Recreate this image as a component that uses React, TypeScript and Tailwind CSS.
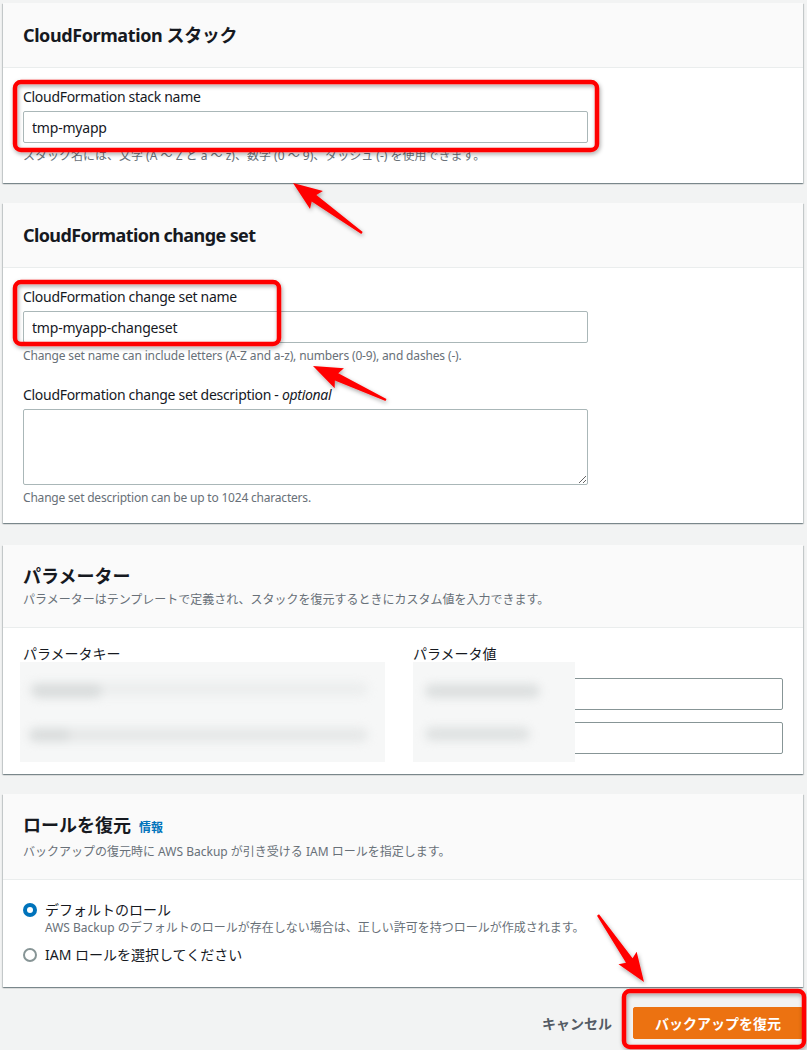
import React from 'react'

const font = { fontFamily: '"Noto Sans", "Noto Sans CJK JP", sans-serif' }

function arrow(x1: number, y1: number, x2: number, y2: number) {
  const dx = x2 - x1
  const dy = y2 - y1
  const len = Math.hypot(dx, dy)
  const ux = dx / len
  const uy = dy / len
  const nx = -uy
  const ny = ux
  const head = 26
  const hw = 11
  const s0 = 1.2
  const s1 = 4
  const bx = x2 - ux * head
  const by = y2 - uy * head
  const p = [
    [x1 + nx * s0, y1 + ny * s0],
    [bx + nx * s1, by + ny * s1],
    [bx + nx * hw - ux * 3, by + ny * hw - uy * 3],
    [x2, y2],
    [bx - nx * hw - ux * 3, by - ny * hw - uy * 3],
    [bx - nx * s1, by - ny * s1],
    [x1 - nx * s0, y1 - ny * s0],
  ]
  return p.map((q) => q.join(',')).join(' ')
}

function Card({ children }: { children: React.ReactNode }) {
  return (
    <div className="bg-white shadow-[0_1px_1px_0_rgba(0,28,36,0.3),1px_1px_1px_0_rgba(0,28,36,0.15),-1px_1px_1px_0_rgba(0,28,36,0.15)]">
      {children}
    </div>
  )
}

function Header({ title, sub, big, info, track }: { title: string; sub?: string; big?: boolean; info?: boolean; track?: string }) {
  if (!big) {
    return (
      <div className="bg-[#fafafa] border-b border-[#eaeded] px-5 py-5">
        <h2 className={`text-[18px] leading-6 font-bold text-[#16191f] ${track ?? ''}`}>{title}</h2>
      </div>
    )
  }
  return (
    <div className="bg-[#fafafa] border-b border-[#eaeded] px-5 pt-[19px] pb-[19px]">
      <h2 className="text-[18px] leading-6 font-bold text-[#16191f] flex items-baseline gap-2">
        {title}
        {info && <span className="text-[12px] font-bold text-[#0073bb]">情報</span>}
      </h2>
      <p className="mt-1 text-[12px] leading-4 text-[#687078]">{sub}</p>
    </div>
  )
}

function Field({ label, value, help, optional, lt, ht }: { label: string; value?: string; help: string; optional?: boolean; lt: string; ht: string }) {
  return (
    <div>
      <div className={`text-[14px] leading-5 text-[#16191f] ${lt}`}>
        {label}
        {optional && <> - <i>optional</i></>}
      </div>
      {value !== undefined ? (
        <input
          readOnly
          defaultValue={value}
          className="mt-1 block w-[565px] h-8 px-2 border border-[#aab7b8] rounded-[2px] text-[14px] tracking-[-0.2px] text-[#16191f] outline-none"
        />
      ) : (
        <textarea className="mt-1 block w-[565px] h-[76px] px-2 border border-[#aab7b8] rounded-[2px] text-[14px] outline-none" />
      )}
      <div className={`mt-[5px] text-[12px] leading-4 text-[#687078] ${ht}`}>{help}</div>
    </div>
  )
}

function Blur({ w, bars }: { w: number; bars: { x: number; y: number; w: number; c: string }[] }) {
  return (
    <div className="absolute top-[34px] h-[100px] bg-[#f6f7f7] overflow-hidden" style={{ width: w }}>
      <div className="blur-[5px]">
        {bars.map((b, i) => (
          <div key={i} className="absolute h-[14px] rounded-full" style={{ left: b.x, top: b.y, width: b.w, background: b.c }} />
        ))}
      </div>
    </div>
  )
}

function Radio({ checked, label, desc }: { checked?: boolean; label: string; desc?: string }) {
  return (
    <div className="flex items-start gap-[8px]">
      <div className="mt-[3px]">
        {checked ? (
          <div className="w-[14px] h-[14px] rounded-full bg-[#0073bb] flex items-center justify-center">
            <div className="w-[6px] h-[6px] rounded-full bg-white" />
          </div>
        ) : (
          <div className="w-[14px] h-[14px] rounded-full border-2 border-[#879596] bg-white" />
        )}
      </div>
      <div>
        <div className="text-[14px] leading-5 text-[#16191f]">{label}</div>
        {desc && <div className="text-[12px] leading-4 text-[#687078]">{desc}</div>}
      </div>
    </div>
  )
}

export default function App() {
  return (
    <div className="relative h-[1050px] overflow-hidden bg-[#f2f3f3] pl-[3px] pr-[4px] pt-[3px]" style={font}>
      <div className="flex flex-col">
        <Card>
          <Header title="CloudFormation スタック" track="tracking-[-0.4px]" />
          <div className="px-5 pt-[19px] pb-[19px]">
            <Field
              label="CloudFormation stack name"
              value="tmp-myapp"
              lt="tracking-[-0.3px]"
              ht=""
              help="スタック名には、文字 (A ～ Z と a ～ z)、数字 (0 ～ 9)、ダッシュ (-) を使用できます。"
            />
          </div>
        </Card>

        <div className="mt-5">
          <Card>
            <Header title="CloudFormation change set" track="tracking-[-0.6px]" />
            <div className="px-5 pt-[19px] pb-[17px] flex flex-col gap-[21px]">
              <Field
                label="CloudFormation change set name"
                value="tmp-myapp-changeset"
                lt="tracking-[-0.3px]"
                ht="tracking-[-0.15px]"
                help="Change set name can include letters (A-Z and a-z), numbers (0-9), and dashes (-)."
              />
              <Field
                label="CloudFormation change set description"
                optional
                lt="tracking-[-0.3px]"
                ht="tracking-[-0.2px]"
                help="Change set description can be up to 1024 characters."
              />
            </div>
          </Card>
        </div>

        <div className="mt-[22px]">
          <Card>
            <Header big title="パラメーター" sub="パラメーターはテンプレートで定義され、スタックを復元するときにカスタム値を入力できます。" />
            <div className="relative px-5 pt-4 pb-5">
              <div className="grid grid-cols-2 gap-x-5">
                <div className="text-[14px] leading-5 text-[#16191f]">パラメータキー</div>
                <div className="text-[14px] leading-5 text-[#16191f]">パラメータ値</div>
              </div>
              <div className="grid grid-cols-2 gap-x-5 gap-y-3 mt-[14px]">
                <div className="h-8" />
                <div className="h-8 border border-[#879596] rounded-[2px] bg-white" />
                <div className="h-8" />
                <div className="h-8 border border-[#879596] rounded-[2px] bg-white" />
              </div>
              <div className="absolute left-[17px] top-0">
                <Blur
                  w={365}
                  bars={[
                    { x: 8, y: 20, w: 340, c: '#eceeee' },
                    { x: 12, y: 22, w: 70, c: '#d9dcdc' },
                    { x: 8, y: 66, w: 340, c: '#e6e8e8' },
                    { x: 10, y: 66, w: 40, c: '#dadddd' },
                  ]}
                />
              </div>
              <div className="absolute left-[410px] top-0">
                <Blur
                  w={162}
                  bars={[
                    { x: 12, y: 22, w: 115, c: '#dcdfdf' },
                    { x: 12, y: 65, w: 105, c: '#dfe2e2' },
                  ]}
                />
              </div>
            </div>
          </Card>
        </div>

        <div className="mt-5">
          <Card>
            <Header big info title="ロールを復元" sub="バックアップの復元時に AWS Backup が引き受ける IAM ロールを指定します。" />
            <div className="px-5 pt-5 pb-[22px] flex flex-col gap-[9px]">
              <Radio
                checked
                label="デフォルトのロール"
                desc="AWS Backup のデフォルトのロールが存在しない場合は、正しい許可を持つロールが作成されます。"
              />
              <Radio label="IAM ロールを選択してください" />
            </div>
          </Card>
        </div>
      </div>

      <div className="flex justify-end items-center gap-[21px] mt-5">
        <span className="text-[14px] font-bold text-[#545b64]">キャンセル</span>
        <button className="h-8 w-[170px] bg-[#ec7211] border border-[#ec7211] rounded-[2px] text-white text-[14px] font-bold">
          バックアップを復元
        </button>
      </div>

      <svg className="absolute inset-0 pointer-events-none" width="807" height="1050">
        <defs>
          <filter id="sh" x="-10%" y="-10%" width="120%" height="130%">
            <feDropShadow dx="1" dy="2" stdDeviation="2" floodColor="#000" floodOpacity="0.35" />
          </filter>
        </defs>
        <g filter="url(#sh)" fill="none" stroke="#ff0000" strokeWidth="4.5">
          <rect x="15" y="82" width="582" height="68" rx="6" />
          <rect x="15" y="282" width="264" height="62" rx="6" />
          <rect x="624" y="991" width="180" height="56" rx="6" />
        </g>
        <g filter="url(#sh)" fill="#ff0000">
          <polygon points={arrow(362, 233, 293, 183)} />
          <polygon points={arrow(386, 400, 313, 366)} />
          <polygon points={arrow(598, 915, 644, 982)} />
        </g>
      </svg>
    </div>
  )
}
